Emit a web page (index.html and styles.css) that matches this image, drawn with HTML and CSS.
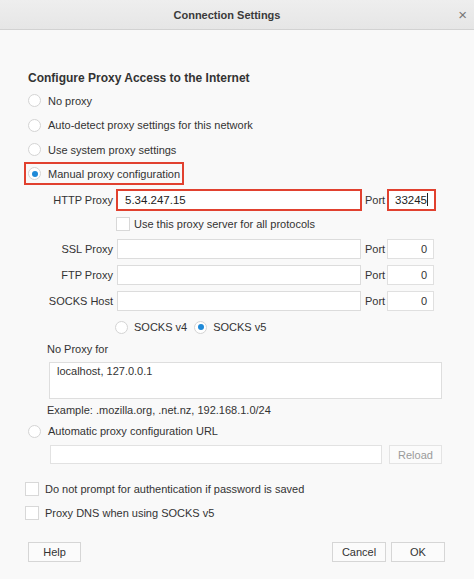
FILE: index.html
```html
<!DOCTYPE html>
<html>
<head>
<meta charset="utf-8">
<link rel="stylesheet" href="styles.css">
</head>
<body>
<div class="dialog">
  <div class="titlebar">
    <span class="title">Connection Settings</span>
    <span class="close">×</span>
  </div>
  <div class="content">
    <div class="heading">Configure Proxy Access to the Internet</div>
    <div class="row r25"><span class="radio"></span><span>No proxy</span></div>
    <div class="row r24"><span class="radio"></span><span>Auto-detect proxy settings for this network</span></div>
    <div class="row r25"><span class="radio"></span><span>Use system proxy settings</span></div>
    <div class="row r25"><span class="manual"><span class="radio on"></span><span>Manual proxy configuration</span></span></div>

    <div class="proxy http">
      <span class="plabel">HTTP Proxy</span>
      <span class="field red">5.34.247.15</span>
      <span class="port">Port</span>
      <span class="pfield red">33245<i class="caret"></i></span>
    </div>
    <div class="proxy use">
      <span></span>
      <span class="check-row"><span class="check"></span><span>Use this proxy server for all protocols</span></span>
    </div>
    <div class="proxy">
      <span class="plabel">SSL Proxy</span>
      <span class="field"></span>
      <span class="port">Port</span>
      <span class="pfield num">0</span>
    </div>
    <div class="proxy">
      <span class="plabel">FTP Proxy</span>
      <span class="field"></span>
      <span class="port">Port</span>
      <span class="pfield num">0</span>
    </div>
    <div class="proxy">
      <span class="plabel">SOCKS Host</span>
      <span class="field"></span>
      <span class="port">Port</span>
      <span class="pfield num">0</span>
    </div>
    <div class="socks">
      <span class="radio"></span><span class="v4">SOCKS v4</span>
      <span class="radio on"></span><span>SOCKS v5</span>
    </div>
    <div class="noproxy">No Proxy for</div>
    <div class="textarea">localhost, 127.0.0.1</div>
    <div class="example">Example: .mozilla.org, .net.nz, 192.168.1.0/24</div>
    <div class="row auto"><span class="radio"></span><span>Automatic proxy configuration URL</span></div>
    <div class="url-row">
      <span class="url"></span>
      <span class="btn reload">Reload</span>
    </div>
    <div class="row cb first"><span class="check"></span><span>Do not prompt for authentication if password is saved</span></div>
    <div class="row cb"><span class="check"></span><span>Proxy DNS when using SOCKS v5</span></div>
    <div class="buttons">
      <span class="btn">Help</span>
      <span class="spacer"></span>
      <span class="btn">Cancel</span>
      <span class="btn">OK</span>
    </div>
  </div>
</div>
</body>
</html>
```

FILE: styles.css
```css
* { box-sizing: border-box; }
html, body { margin: 0; padding: 0; }
body {
  width: 474px;
  height: 579px;
  background: #f9f9f9;
  font-family: "Liberation Sans", Arial, sans-serif;
  font-size: 11px;
  color: #333;
  overflow: hidden;
}
.dialog { width: 474px; height: 579px; background: #f9f9f9; }
.titlebar {
  height: 30px;
  background: linear-gradient(#eeeeee, #e6e6e6);
  border-bottom: 1px solid #d2d2d2;
  display: flex;
  align-items: center;
  justify-content: center;
  position: relative;
}
.title { font-weight: bold; font-size: 11px; color: #3a3a3a; margin-right: 20px; }
.close {
  position: absolute;
  right: 7px;
  top: 6px;
  font-size: 15px;
  color: #777;
}
.content { padding: 0 29px 0 28px; }
.heading {
  margin-top: 38px;
  height: 20px;
  line-height: 20px;
  font-size: 12px;
  font-weight: bold;
  color: #333;
}
.row { display: flex; align-items: center; gap: 7px; white-space: nowrap; }
.r25 { height: 25px; }
.r24 { height: 24px; }
.radio {
  width: 13px;
  height: 13px;
  border-radius: 50%;
  border: 1px solid #d4d4d4;
  background: #fff;
  flex: none;
  display: inline-flex;
  align-items: center;
  justify-content: center;
}
.radio.on::after {
  content: "";
  width: 6px;
  height: 6px;
  border-radius: 50%;
  background: #1f8ad8;
}
.manual {
  display: flex;
  align-items: center;
  gap: 7px;
  margin-left: -4px;
  padding: 0 2px 0 2px;
  height: 23px;
  border: 2px solid #e1412f;
  margin-top: -2px;
  white-space: nowrap;
}
.proxy {
  display: grid;
  grid-template-columns: 88px 246px 25px 48px;
  align-items: center;
  height: 26px;
  white-space: nowrap;
}
.proxy.http { height: 25px; }
.proxy.use { height: 24px; }
.plabel { text-align: right; padding-right: 3px; }
.field {
  height: 20px;
  border: 1px solid #dcdcdc;
  background: #fff;
  margin: 0 1px;
  line-height: 18px;
  padding-left: 7px;
}
.field.red {
  height: 22px;
  border: 2px solid #e1412f;
  margin: 0;
  line-height: 18px;
  font-size: 11.5px;
  color: #222;
}
.port { padding-left: 3px; }
.pfield {
  height: 20px;
  border: 1px solid #e0e0e0;
  background: #fff;
  line-height: 18px;
  width: 47px;
}
.pfield.num { text-align: right; padding-right: 6px; }
.pfield.red {
  height: 22px;
  width: 49px;
  border: 2px solid #e1412f;
  padding-left: 6px;
  font-size: 11.5px;
  line-height: 18px;
  color: #222;
}
.caret {
  display: inline-block;
  width: 1px;
  height: 13px;
  background: #222;
  vertical-align: -2px;
}
.check-row { display: flex; align-items: center; gap: 4px; }
.check {
  width: 14px;
  height: 14px;
  border: 1px solid #d8d8d8;
  background: #fff;
  flex: none;
  display: inline-block;
}
.socks {
  height: 26px;
  display: flex;
  align-items: center;
  padding-left: 87px;
}
.socks .radio { margin-right: 6px; }
.socks .v4 { margin-right: 7px; }
.noproxy {
  height: 18px;
  line-height: 18px;
  padding-left: 19px;
}
.textarea {
  margin-left: 21px;
  width: 393px;
  height: 37px;
  border: 1px solid #dedede;
  background: #fff;
  padding: 1px 7px;
  line-height: 14px;
  margin-top: 4px;
}
.example {
  height: 22px;
  line-height: 22px;
  padding-left: 19px;
}
.row.auto { height: 20px; }
.url-row {
  display: flex;
  gap: 7px;
  margin-top: 4px;
  margin-left: 22px;
  height: 19px;
}
.url {
  width: 332px;
  height: 19px;
  border: 1px solid #e2e2e2;
  background: #fff;
}
.btn {
  height: 20px;
  border: 1px solid #d6d6d6;
  background: #fbfbfb;
  display: inline-flex;
  align-items: center;
  justify-content: center;
  width: 54px;
  color: #333;
}
.btn.reload { height: 19px; color: #9a9a9a; width: 53px; border-color: #e4e4e4; }
.row.cb { height: 24px; margin-left: -3px; gap: 6px; }
.row.cb.first { margin-top: 13px; }
.buttons {
  display: flex;
  margin-top: 17px;
  gap: 5px;
}
.buttons .btn:first-child { width: 53px; }
.spacer { flex: 1; }
```
